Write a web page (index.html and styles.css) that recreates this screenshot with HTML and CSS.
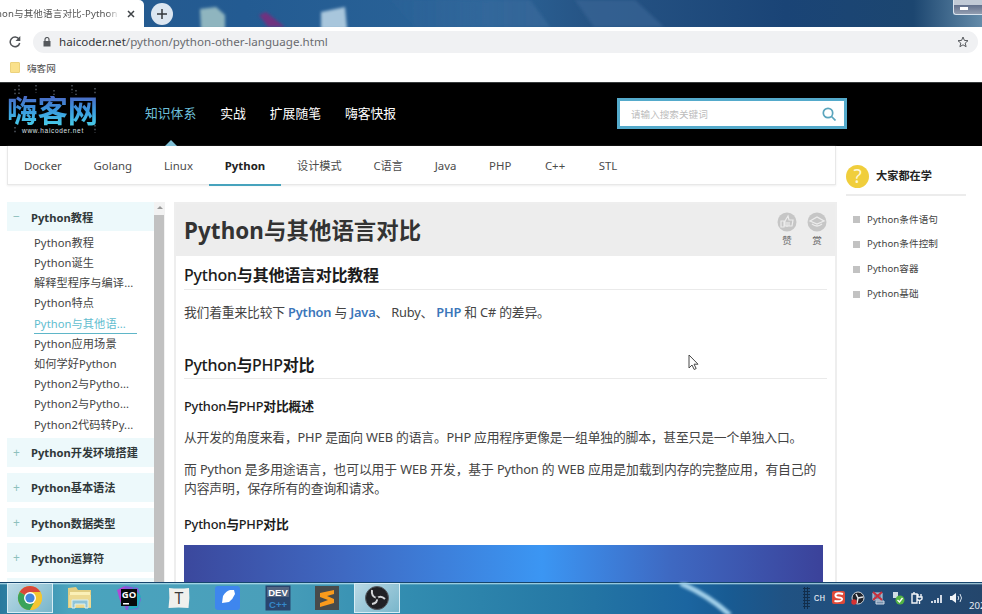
FILE: index.html
```html
<!DOCTYPE html>
<html lang="zh-CN">
<head>
<meta charset="utf-8">
<title>Python与其他语言对比-Python教程</title>
<link rel="stylesheet" href="styles.css">
</head>
<body>
<div class="screen">
  <header class="tabstrip">
    <svg class="wallpaper" viewBox="0 0 982 27" preserveAspectRatio="none">
      <defs>
        <linearGradient id="sky"><stop offset="0" stop-color="#285a8e"/><stop offset=".25" stop-color="#235b92"/><stop offset=".5" stop-color="#2b6498"/><stop offset=".6" stop-color="#265485"/><stop offset=".8" stop-color="#1a4476"/><stop offset=".93" stop-color="#1c4670"/><stop offset="1" stop-color="#648ba9"/></linearGradient>
        <linearGradient id="ray"><stop offset="0" stop-color="#386aa0" stop-opacity=".1"/><stop offset="1" stop-color="#3c6c9d"/></linearGradient>
        <filter id="soft"><feGaussianBlur stdDeviation="1.5"/></filter>
      </defs>
      <path fill="url(#sky)" d="M0 0h982v27H0z"/>
      <g filter="url(#soft)"><path fill="url(#ray)" opacity=".65" d="M390 0H530L550 27H415z"/>
      <path fill="#3c6797" opacity=".65" d="M575 0H635L664 27H594z"/></g>
      <g filter="url(#soft)"><path fill="#8fb5bf" d="M200 9l16-2 9 8v14h-24z"/><path fill="#6f317f" d="M259 15l7-3 19 15h-17z"/><path fill="#a8c6dc" d="M321 12l24-5 2 22h-26z"/></g>
    </svg>
    <div class="tab"><span class="tab-title">hon与其他语言对比-Python</span><svg class="tab-close" viewBox="0 0 8 8"><path d="M1 1l6 6M7 1L1 7"/></svg></div>
    <div class="new-tab"><svg viewBox="0 0 10 10"><path d="M5 0v10M0 5h10"/></svg></div>
    <div class="minimize"><i></i></div>
  </header>

  <div class="toolbar">
    <svg class="reload" viewBox="0 0 12 12"><path d="M10 3.2A4.8 4.8 0 1 0 10.7 7" fill="none" stroke="#505357" stroke-width="1.5"/><path d="M11.3 0v5H6.5z" fill="#505357"/></svg>
    <div class="address">
      <svg class="lock" viewBox="0 0 8 10"><path d="M.5 4h7v5.5h-7z" fill="#55585c"/><path d="M2 4V2.5a2 2 0 0 1 4 0V4" fill="none" stroke="#55585c" stroke-width="1.2"/></svg>
      <span class="url"><b>haicoder.net</b>/python/python-other-language.html</span>
      <svg class="star" viewBox="0 0 12 12"><path d="M6 1l1.4 3.4 3.6.3-2.8 2.4.9 3.6L6 8.8l-3.1 1.9.9-3.6L1 4.700l3.600-.3z" fill="none" stroke="#55585c"/></svg>
    </div>
  </div>
  <div class="bookmarks"><i class="folder"></i><span>嗨客网</span></div>

  <div class="site">
    <div class="topbar">
      <div class="logo">
        <svg class="bits" viewBox="0 0 92 50"><path d="M8 5v7M12 1v9M29 1v8M47 6v5M65 1v8M69 6v5M88 4v7M8 43v6M88 41v8" fill="none" stroke="#a9b6c6" stroke-width="1.2" stroke-dasharray="1.5 2.200" opacity=".6"/></svg>
        <span class="logo-name">嗨客网</span>
        <span class="logo-url">www.haicoder.net</span>
      </div>
      <nav class="mainnav"><a class="on">知识体系</a><a>实战</a><a>扩展随笔</a><a>嗨客快报</a></nav>
      <div class="search"><span>请输入搜索关键词</span><svg viewBox="0 0 14 14"><circle cx="6" cy="6" r="4.700"/><path d="M9.500 9.500l4 4"/></svg></div>
    </div>

    <div class="columns">
      <div class="primary">
        <nav class="subnav"><a>Docker</a><a>Golang</a><a>Linux</a><a class="on">Python</a><a>设计模式</a><a>C语言</a><a>Java</a><a>PHP</a><a>C++</a><a>STL</a></nav>
        <div class="work">
          <aside class="sidebar">
            <div class="tree">
              <h4><i>−</i>Python教程</h4>
              <ul><li>Python教程</li><li>Python诞生</li><li>解释型程序与编译...</li><li>Python特点</li><li class="on">Python与其他语...</li><li>Python应用场景</li><li>如何学好Python</li><li>Python2与Pytho...</li><li>Python2与Pytho...</li><li>Python2代码转Py...</li></ul>
              <h4><i>+</i>Python开发环境搭建</h4>
              <h4><i>+</i>Python基本语法</h4>
              <h4><i>+</i>Python数据类型</h4>
              <h4><i>+</i>Python运算符</h4>
              <h4></h4>
            </div>
            <div class="scrollbar"><i></i></div>
          </aside>
          <article class="article">
            <div class="headline">
              <h1>Python与其他语言对比</h1>
              <div class="votes">
                <div><svg viewBox="0 0 20 20"><circle cx="10" cy="10" r="9.500" fill="#c6c6c6"/><path d="M4 9h3v6H4zM8 9l3-5 1 4h4l-1 6H8zM10 10v5M12 10v4" fill="none" stroke="#ececec" stroke-width="1.200"/></svg><span>赞</span></div>
                <div><svg viewBox="0 0 20 20"><circle cx="10" cy="10" r="9.500" fill="#c6c6c6"/><path d="M3 9l7-4 7 4-7 3zM5 12q5 4 10 0" fill="none" stroke="#ececec" stroke-width="1.300"/></svg><span>赏</span></div>
              </div>
            </div>
            <div class="prose">
              <h2>Python<b>与其他语言对比教程</b></h2>
              <p class="intro">我们着重来比较下 <a>Python</a> 与 <a>Java</a>、 Ruby、 <a>PHP</a> 和 C# 的差异。</p>
              <h2 class="second">Python<b>与</b>PHP<b>对比</b></h2>
              <h3>Python<b>与</b>PHP<b>对比概述</b></h3>
              <p class="first">从开发的角度来看，PHP 是面向 WEB 的语言。PHP 应用程序更像是一组单独的脚本，甚至只是一个单独入口。</p>
              <p>而 Python 是多用途语言，也可以用于 WEB 开发，基于 Python 的 WEB 应用是加载到内存的完整应用，有自己的<br>内容声明，保存所有的查询和请求。</p>
              <h3 class="compare">Python<b>与</b>PHP<b>对比</b></h3>
              <div class="banner"></div>
            </div>
          </article>
        </div>
      </div>
      <aside class="learning">
        <h5><i>?</i>大家都在学</h5>
        <ul><li>Python条件语句</li><li>Python条件控制</li><li>Python容器</li><li>Python基础</li></ul>
      </aside>
    </div>
  </div>

  <footer class="taskbar">
    <svg class="beam" viewBox="0 0 302 32"><path d="M0 0q28 12 50 32" fill="none" stroke="#a6d3ec" stroke-width="5"/></svg>
    <div class="apps">
      <div class="app active"><svg viewBox="0 0 26 26"><circle cx="13" cy="13" r="12" fill="#eeba2b"/><path d="M13 13L2.600 7A12 12 0 0 1 23.400 7z" fill="#d9473a"/><path d="M13 13L2.600 7A12 12 0 0 0 13 25l5-9z" fill="#3aa35a"/><path d="M13 7h10.400A12 12 0 0 1 13 25l5-9z" fill="#f3c632"/><circle cx="13" cy="13" r="6" fill="#fff"/><circle cx="13" cy="13" r="4.600" fill="#4285dc"/></svg></div>
      <div class="app"><svg viewBox="0 0 26 26"><path d="M1 3l8-1 2 3h13v18H1z" fill="#e1ce83"/><path d="M3 7h20v13H3z" fill="#fbf0b7"/><path d="M2 10h22v12H2z" fill="#edda93"/><path d="M5 23v-8h16v8h-3v-4H8v4z" fill="#90c4d8" stroke="#dbf0f2"/></svg></div>
      <div class="app"><svg viewBox="0 0 26 26"><path d="M3 4l7-3 12 2 3 11-3 10-12 1z" fill="#825cdb"/><path d="M17 2l8 9-3 12-10 2z" fill="#27aabf"/><path d="M1 5l8-4-4 18z" fill="#b445d6"/><path d="M5 4h16v17H5z" fill="#080a0c"/><path d="M7 18h6v1.500H7z" fill="#fff"/><text x="13" y="13" class="go">GO</text></svg></div>
      <div class="app"><svg viewBox="0 0 26 26"><path d="M3 3q10 1 20 0 1 10-.5 20Q13 22 2.500 23 4 13 3 3z" fill="#f0f0ed"/><text x="13" y="19" class="ty">T</text></svg></div>
      <div class="app"><svg viewBox="0 0 26 26"><rect x="0" y="1" width="25" height="24" rx="3" fill="#3e86ee"/><path d="M7 18l1-7q3-5 7-6l4 0 1 4q-2 5-6 8z" fill="#fff"/></svg></div>
      <div class="app"><svg viewBox="0 0 26 26"><path d="M.5.500h25v25H.5z" fill="#29456e"/><path d="M2 2h22v10H2z" fill="#536581"/><text x="13" y="10.500" class="dev">DEV</text><text x="13" y="23" class="dev low">C++</text></svg></div>
      <div class="app"><svg viewBox="0 0 26 26"><path d="M1 1h24v24H1z" fill="#484b4b"/><path d="M20 5v4l-7 2 7 3v4L6 22v-4l8-3-8-3V8z" fill="#fa9b1c"/></svg></div>
      <div class="app active"><svg viewBox="0 0 26 26"><circle cx="13" cy="13" r="11.500" fill="#202125" stroke="#555b62"/><path d="M13 13Q7 12 8 5M13 13q4-3 8 1M13 13q1 5-5 6" fill="none" stroke="#d3d6d8" stroke-width="2"/><circle cx="13" cy="13" r="1.500" fill="#202125"/></svg></div>
    </div>
    <div class="tray">
      <i class="grip"></i>
      <span class="lang">CH</span>
      <svg viewBox="0 0 14 14"><rect width="13" height="13" rx="2" fill="#df4938"/><path d="M11 3Q3 1 3.500 5q.5 1.500 3 1.500 4 0 3.500 2Q9 11 2.500 10" fill="none" stroke="#fff" stroke-width="2"/></svg>
      <svg viewBox="0 0 14 14"><circle cx="7" cy="7" r="6" fill="#20242b" stroke="#ced3d8"/><path d="M7 7L5 3M7 7l5-1M7 7l-1 5" stroke="#e3e5e8" stroke-width="1.500"/><circle cx="3" cy="11" r="2.700" fill="#d83232"/></svg>
      <svg viewBox="0 0 14 14"><path d="M2 2h9v7H2zM5 10h8v3H5z" fill="#7690ad" stroke="#ccd8e4"/><path d="M2 1l9 8M11 1L2 9" stroke="#c92f3c" stroke-width="2"/></svg>
      <svg viewBox="0 0 14 14"><path d="M2 1h5v6H2z" fill="#d0dce5"/><circle cx="9" cy="9" r="4.500" fill="#53b443"/><path d="M6.500 9l2 2 3-4" fill="none" stroke="#fff" stroke-width="1.300"/></svg>
      <svg viewBox="0 0 14 14"><path d="M2 3h5v9H2zM4 1v2M8 3v3M11 3v3M7 6h5v2q-2.500 3-5 0zM9.500 9v4" fill="none" stroke="#f2f5f8" stroke-width="1.400"/></svg>
      <svg viewBox="0 0 14 14"><path d="M2 12v-2M5 12V9M8 12V7M11 12V4" stroke="#f0f4f9" stroke-width="1.700"/></svg>
      <svg viewBox="0 0 14 14"><path d="M1 5h2l4-3v10L3 9H1z" fill="#f2f5f8"/><path d="M9 5q1.500 2 0 4M11 3q3 4 0 8" fill="none" stroke="#d7e1eb"/></svg>
      <span class="date">202</span>
    </div>
  </footer>
  <svg class="pointer" viewBox="0 0 11 17"><path d="M1 1v13l3-3 2.200 4.500 2-1L6 10.200h4z" fill="#fff" stroke="#484848"/></svg>
</div>
</body>
</html>
```
FILE: styles.css
```css
* { box-sizing: border-box; }
body { margin: 0; font-family: "Noto Sans", "Noto Sans CJK SC", sans-serif; color: #444; }
h1, h2, h3, h4, h5, p, ul { margin: 0; padding: 0; }
ul { list-style: none; }
svg { display: block; flex: none; }
.screen { position: relative; width: 982px; height: 614px; overflow: hidden; display: flex; flex-direction: column; background: #fff; }

.tabstrip { position: relative; height: 27px; flex: none; display: flex; border-bottom: 1px solid #244563; }
.wallpaper { position: absolute; inset: 0; width: 982px; height: 27px; }
.tab { position: relative; width: 144px; height: 27px; background: #fff; border-radius: 0 5px 0 0; display: flex; align-items: center; }
.tab-title { width: 121px; overflow: hidden; white-space: nowrap; font-size: 9.6px; text-indent: -4px; letter-spacing: .1px; color: #555; line-height: 27px; -webkit-mask-image: linear-gradient(90deg, #000 88%, transparent 99%); mask-image: linear-gradient(90deg, #000 88%, transparent 99%); }
.tab-close { width: 8px; height: 8px; margin-left: 6px; fill: none; stroke: #3f4347; stroke-width: 1.5; }
.new-tab { position: relative; margin: 3px 0 0 7px; width: 22px; height: 22px; border-radius: 50%; background: #dce6f1; display: flex; align-items: center; justify-content: center; }
.new-tab svg { width: 10px; height: 10px; stroke: #35393d; stroke-width: 1.5; }
.minimize { position: relative; margin-left: auto; width: 29px; height: 15px; border: 1px solid #d8e3ee; border-width: 0 0 1px 1px; border-radius: 0 0 0 3px; background: linear-gradient(#c1cad6 0 35%, #62708c 36%, #929db0); display: flex; justify-content: center; align-items: center; padding: 3px 9px 0 0; }
.minimize i { width: 8px; height: 3px; background: #fff; }

.toolbar { height: 29px; flex: none; display: flex; align-items: center; padding: 0 4px 0 9px; }
.reload { width: 12px; height: 12px; }
.address { flex: 1; height: 22px; margin-left: 12px; padding: 0 9px 0 10px; border-radius: 11px; background: #f0f1f3; display: flex; align-items: center; }
.lock { width: 8px; height: 10px; }
.url { margin-left: 8px; font-size: 11.6px; line-height: 20px; color: #696b6f; white-space: nowrap; }
.url b { font-weight: 400; color: #35373a; }
.star { width: 12px; height: 12px; margin-left: auto; }
.bookmarks { height: 26px; flex: none; display: flex; align-items: center; padding: 0 0 3px 10px; font-size: 9.6px; color: #494949; }
.folder { width: 10px; height: 11px; margin-right: 7px; border-radius: 1px; background: #fae18c; border: 1px solid #ecd27c; }

.site { height: 500px; flex: none; overflow: hidden; }
.topbar { height: 64px; background: #000; border-top: 1px solid #373b3c; display: flex; }
.logo { position: relative; width: 92px; margin-left: 7px; padding-top: 13px; }
.bits { position: absolute; top: 1px; left: 0; width: 92px; height: 50px; }
.logo-name { position: relative; display: block; height: 30px; line-height: 29px; font-size: 30.400px; font-weight: 700; color: transparent; background: linear-gradient(#496dc6 5%, #3a9ce0 50%, #48c8e7 95%); -webkit-background-clip: text; background-clip: text; white-space: nowrap; }
.logo-url { display: block; margin-top: 1px; text-align: center; font: 6.500px/8px "Liberation Sans", sans-serif; letter-spacing: .68px; color: #dfe2e5; }
.mainnav { display: flex; gap: 24px; margin-left: 46px; font-size: 12.8px; line-height: 60px; color: #fff; }
.mainnav .on { position: relative; color: #6fc0dc; }
.mainnav .on::after { content: ""; position: absolute; left: 20px; bottom: 0; border: 6px solid transparent; border-top: 0; border-bottom-color: #7fbfd5; }
.search { margin: 15px 0 0 auto; margin-right: 135px; width: 230px; height: 31px; border: 3px solid #54aacb; background: #fff; display: flex; align-items: center; padding: 0 8px 0 11px; font-size: 9.6px; color: #bcbcbc; }
.search svg { margin-left: auto; width: 14px; height: 14px; fill: none; stroke: #5aa5bd; stroke-width: 1.7; }

.columns { display: flex; }
.primary { width: 837px; }
.subnav { height: 39px; margin-left: 7px; width: 829px; display: flex; border: 1px solid #e8e8e8; border-width: 0 1px 1px 1px; font-size: 11.4px; line-height: 39px; box-shadow: 0 1px 2px #eee; color: #4b4b4b; }
.subnav a { padding: 0 15.900px; height: 40px; white-space: nowrap; }
.subnav a:nth-child(5), .subnav a:nth-child(6) { font-size: 11.2px; }
.subnav a:nth-child(n+8) { padding: 0 16.8px; }
.subnav .on { font-weight: 700; color: #222; border-bottom: 2px solid #47a3bd; }
.work { display: flex; margin-top: 17px; }
.sidebar { width: 158px; margin-left: 7px; height: 380px; display: flex; }
.tree { width: 147px; }
.tree h4 { height: 29.200px; margin-bottom: 6px; display: flex; align-items: center; background: #edf9fb; font-size: 11.2px; color: #303839; white-space: nowrap; }
.tree h4 i { width: 24px; padding-left: 6px; font-style: normal; font-weight: 400; font-size: 12px; color: #8ec0bd; }
.tree ul { padding: 0 0 0 27px; margin: -4px 0 3px; font-size: 11.2px; line-height: 20.100px; letter-spacing: .08px; white-space: nowrap; }
.tree li { height: 20.100px; }
.tree .on { width: 103px; height: 20.600px; color: #61bdcf; border-bottom: 1px solid #5fb6c8; }
.scrollbar { width: 11px; background: #f2f2f2; padding-top: 4px; }
.scrollbar::before { content: ""; display: block; margin: 0 auto 6px; width: 0; border: 3px solid transparent; border-top: 0; border-bottom-color: #999; }
.scrollbar i { display: block; height: 368px; background: #c1c1c1; width: 10px; }
.article { width: 663px; margin-left: 9px; height: 380px; border: 2px solid #eeeeee; border-bottom: 0; overflow: hidden; }
.headline { height: 52px; background: #ededed; display: flex; justify-content: space-between; padding: 0 8px; }
.headline h1 { font-size: 22.4px; line-height: 54px; letter-spacing: .08px; color: #333; }
.votes { display: flex; gap: 10px; padding-top: 8px; text-align: center; font-size: 9.6px; line-height: 18px; color: #666; }
.votes svg { width: 20px; height: 20px; }
.prose { padding: 0 8px; font-size: 12.8px; line-height: 19.200px; letter-spacing: -.12px; color: #444; }
.prose h2 { height: 34px; line-height: 38px; font-size: 16px; letter-spacing: -.22px; font-weight: 500; color: #1c1c1c; border-bottom: 1px solid #eaeaea; }
.prose h2.second { height: 30px; line-height: 32px; margin: 27px 0 17px; letter-spacing: -.3px; }
.prose h3 { font-size: 12.8px; letter-spacing: -.2px; font-weight: 500; color: #1c1c1c; line-height: 20px; }
.prose b { font-weight: 700; }
.prose p { white-space: nowrap; margin-top: 12.800px; }
.prose .intro { margin-top: 13px; letter-spacing: -.18px; }
.prose .first { margin-top: 11.800px; letter-spacing: -.18px; }
.prose a { color: #3b76ba; font-weight: 600; }
.prose .compare { margin-top: 16px; }
.banner { margin-top: 11px; height: 50px; width: 639px; background: linear-gradient(90deg, #3b489d, #3f69c2 25%, #3b96f3 56%, #3e69c2 76%, #3b429a); }
.learning { padding: 19px 0 0 9px; width: 145px; }
.learning h5 { width: 120px; height: 31px; border-bottom: 2px solid #ececec; display: flex; gap: 7px; font-size: 11.2px; line-height: 22px; color: #222; }
.learning h5 i { width: 23px; height: 23px; border-radius: 50%; background: #f0ce3c; color: #fff8d8; font-style: normal; font-size: 19px; font-weight: 400; text-align: center; line-height: 23px; }
.learning ul { padding: 11.500px 0 0 7px; font-size: 9.6px; line-height: 24.800px; letter-spacing: .08px; color: #444; }
.learning li { display: flex; align-items: center; gap: 7px; height: 24.800px; }
.learning li::before { content: ""; width: 7px; height: 7px; background: #c2c2c2; }

.taskbar { position: relative; height: 32px; flex: none; border-top: 1px solid #16456d; display: flex; background: linear-gradient(#bce5f0, transparent 2px), linear-gradient(90deg, #297a9e 0, #4aa4be 7%, #4a9fba 27%, #338eb1 40%, #2578a5 58%, #1b65a0 70%, #185b93 74%, #205283 80%, #24466c 100%); }
.beam { position: absolute; left: 680px; top: 0; width: 302px; height: 32px; filter: blur(1.5px); }
.apps { display: flex; gap: 3.500px; padding-left: 7px; }
.app { width: 46px; height: 30px; display: flex; align-items: center; justify-content: center; }
.app svg { width: 26px; height: 26px; }
.active { border: 1px solid #d7edf5; background: linear-gradient(135deg, #bad9e5, #79b6cb); }
.go { font: 700 9.500px "Open Sans", sans-serif; text-anchor: middle; fill: #fff; }
.ty { font: 16px "Open Sans", sans-serif; text-anchor: middle; fill: #393939; }
.dev { font: 700 9.500px "Liberation Sans", sans-serif; text-anchor: middle; fill: #fff; }
.low { fill: #3588ca; }
.tray { position: relative; margin-left: auto; display: flex; align-items: center; gap: 5.600px; height: 30px; color: #e7eef5; }
.tray svg { width: 14px; height: 14px; }
.grip { width: 7px; height: 22px; margin-right: -2px; background: radial-gradient(circle, #122e4c 1px, transparent 1.2px) 0 0 / 3px 3px; }
.lang { margin-right: 1px; font: 9.500px "Liberation Mono", monospace; }
.date { width: 13px; align-self: flex-end; padding-bottom: 1px; font-size: 9.600px; line-height: 13px; overflow: hidden; }
.pointer { position: absolute; left: 688px; top: 354px; width: 11px; height: 17px; }
```
